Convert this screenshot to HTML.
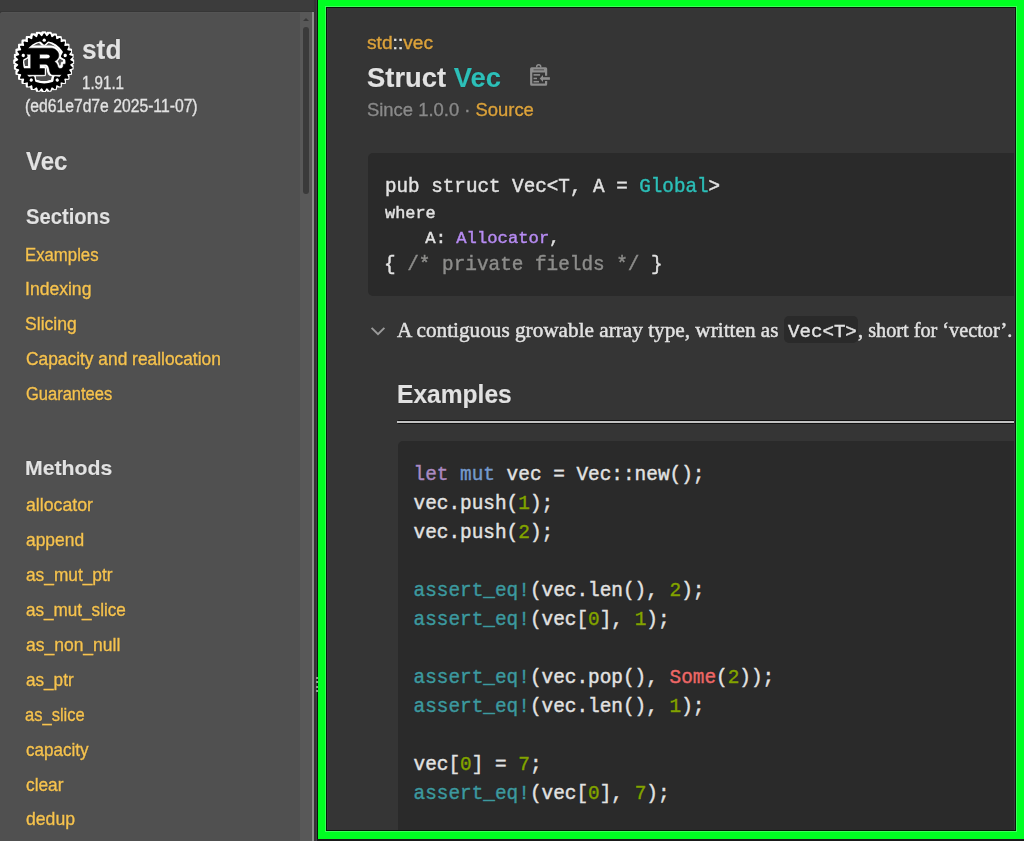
<!DOCTYPE html>
<html><head><meta charset="utf-8">
<style>
html,body{margin:0;padding:0}
body{width:1024px;height:841px;overflow:hidden;position:relative;background:#353535;font-family:"Liberation Sans",sans-serif}
.abs{position:absolute}
.t{position:absolute;white-space:pre;line-height:1;transform-origin:0 0;text-shadow:0 0 1px rgba(0,0,0,0.55)}
#topbar{left:0;top:0;width:316px;height:12px;background:#3c3c3c;box-shadow:inset 0 -1px 0 #363636}
#sidebar{left:0;top:12px;width:300px;height:829px;background:#505050;border-top-left-radius:3px;box-shadow:inset 0 1px 0 #545454}
#track{left:300px;top:12px;width:12px;height:829px;background:#585858}
#thumb{left:303px;top:27px;width:6.2px;height:166.5px;background:#3a3a3a;border-radius:3.1px}
#arrow{left:303.4px;top:18.2px;width:0;height:0;border-left:3px solid transparent;border-right:3px solid transparent;border-bottom:3.6px solid #383838}
#tline{left:312px;top:12px;width:2px;height:829px;background:#8c8c8c}
#dline{left:314px;top:0;width:2px;height:841px;background:#353535}
#pline{left:316px;top:0;width:1px;height:841px;background:#45384a}
#green{left:317px;top:0;width:707px;height:840px;background:#061806}
#main{left:326px;top:7px;width:690px;height:824px;overflow:hidden;background:#353535}
#gin{left:318px;top:0;width:706px;height:839px;box-sizing:border-box;border-left:8px solid #00ff22;border-top:7px solid #00ff22;border-right:8px solid #00ff22;border-bottom:8px solid #00ff22}
#gdark{left:326px;top:7px;width:690px;height:824px;box-sizing:border-box;border:1px solid #061806}
#bottomdark{left:317px;top:839px;width:707px;height:2px;background:#1a1a1a}
.cb{position:absolute;background:#2a2a2a;border-radius:5px}
</style></head><body>
<div id="topbar" class="abs"></div>
<div id="sidebar" class="abs"></div>
<div id="track" class="abs"></div>
<div id="arrow" class="abs"></div>
<div id="thumb" class="abs"></div>
<svg class="abs" id="logo" style="left:15.05px;top:32.9px;filter:drop-shadow(1.3px 0 0px #fff) drop-shadow(0 1.3px 0 #fff) drop-shadow(-1.3px 0 0 #fff) drop-shadow(0 -1.3px 0 #fff)" width="58.5" height="58.5" viewBox="0 0 106 106">
<defs><mask id="holes" maskUnits="userSpaceOnUse" x="-60" y="-60" width="120" height="120"><rect x="-60" y="-60" width="120" height="120" fill="white"/><circle transform="rotate(0)" cy="-40" r="3" fill="black"/><circle transform="rotate(72)" cy="-40" r="3" fill="black"/><circle transform="rotate(144)" cy="-40" r="3" fill="black"/><circle transform="rotate(216)" cy="-40" r="3" fill="black"/><circle transform="rotate(288)" cy="-40" r="3" fill="black"/></mask></defs>
<g transform="translate(53,53)">
<path transform="translate(0.5,0.5)" stroke="black" stroke-width="1" stroke-linejoin="round" d="M -9,-15 H 4 C 12,-15 12,-7 4,-7 H -9 Z M -40,22 H 0 V 11 H -9 V 3 H 1 C 12,3 6,22 15,22 H 40 V 3 H 34 V 5 C 34,13 25,12 24,7 C 23,2 19,-2 18,-2 C 33,-10 24,-26 12,-26 H -35 V -15 H -25 V 11 H -40 Z"/>
<g mask="url(#holes)"><circle r="43" fill="none" stroke="black" stroke-width="9"/><polygon transform="rotate(0.0000)" stroke="black" stroke-width="3" stroke-linejoin="round" points="46,3 51,0 46,-3"/><polygon transform="rotate(11.2500)" stroke="black" stroke-width="3" stroke-linejoin="round" points="46,3 51,0 46,-3"/><polygon transform="rotate(22.5000)" stroke="black" stroke-width="3" stroke-linejoin="round" points="46,3 51,0 46,-3"/><polygon transform="rotate(33.7500)" stroke="black" stroke-width="3" stroke-linejoin="round" points="46,3 51,0 46,-3"/><polygon transform="rotate(45.0000)" stroke="black" stroke-width="3" stroke-linejoin="round" points="46,3 51,0 46,-3"/><polygon transform="rotate(56.2500)" stroke="black" stroke-width="3" stroke-linejoin="round" points="46,3 51,0 46,-3"/><polygon transform="rotate(67.5000)" stroke="black" stroke-width="3" stroke-linejoin="round" points="46,3 51,0 46,-3"/><polygon transform="rotate(78.7500)" stroke="black" stroke-width="3" stroke-linejoin="round" points="46,3 51,0 46,-3"/><polygon transform="rotate(90.0000)" stroke="black" stroke-width="3" stroke-linejoin="round" points="46,3 51,0 46,-3"/><polygon transform="rotate(101.2500)" stroke="black" stroke-width="3" stroke-linejoin="round" points="46,3 51,0 46,-3"/><polygon transform="rotate(112.5000)" stroke="black" stroke-width="3" stroke-linejoin="round" points="46,3 51,0 46,-3"/><polygon transform="rotate(123.7500)" stroke="black" stroke-width="3" stroke-linejoin="round" points="46,3 51,0 46,-3"/><polygon transform="rotate(135.0000)" stroke="black" stroke-width="3" stroke-linejoin="round" points="46,3 51,0 46,-3"/><polygon transform="rotate(146.2500)" stroke="black" stroke-width="3" stroke-linejoin="round" points="46,3 51,0 46,-3"/><polygon transform="rotate(157.5000)" stroke="black" stroke-width="3" stroke-linejoin="round" points="46,3 51,0 46,-3"/><polygon transform="rotate(168.7500)" stroke="black" stroke-width="3" stroke-linejoin="round" points="46,3 51,0 46,-3"/><polygon transform="rotate(180.0000)" stroke="black" stroke-width="3" stroke-linejoin="round" points="46,3 51,0 46,-3"/><polygon transform="rotate(191.2500)" stroke="black" stroke-width="3" stroke-linejoin="round" points="46,3 51,0 46,-3"/><polygon transform="rotate(202.5000)" stroke="black" stroke-width="3" stroke-linejoin="round" points="46,3 51,0 46,-3"/><polygon transform="rotate(213.7500)" stroke="black" stroke-width="3" stroke-linejoin="round" points="46,3 51,0 46,-3"/><polygon transform="rotate(225.0000)" stroke="black" stroke-width="3" stroke-linejoin="round" points="46,3 51,0 46,-3"/><polygon transform="rotate(236.2500)" stroke="black" stroke-width="3" stroke-linejoin="round" points="46,3 51,0 46,-3"/><polygon transform="rotate(247.5000)" stroke="black" stroke-width="3" stroke-linejoin="round" points="46,3 51,0 46,-3"/><polygon transform="rotate(258.7500)" stroke="black" stroke-width="3" stroke-linejoin="round" points="46,3 51,0 46,-3"/><polygon transform="rotate(270.0000)" stroke="black" stroke-width="3" stroke-linejoin="round" points="46,3 51,0 46,-3"/><polygon transform="rotate(281.2500)" stroke="black" stroke-width="3" stroke-linejoin="round" points="46,3 51,0 46,-3"/><polygon transform="rotate(292.5000)" stroke="black" stroke-width="3" stroke-linejoin="round" points="46,3 51,0 46,-3"/><polygon transform="rotate(303.7500)" stroke="black" stroke-width="3" stroke-linejoin="round" points="46,3 51,0 46,-3"/><polygon transform="rotate(315.0000)" stroke="black" stroke-width="3" stroke-linejoin="round" points="46,3 51,0 46,-3"/><polygon transform="rotate(326.2500)" stroke="black" stroke-width="3" stroke-linejoin="round" points="46,3 51,0 46,-3"/><polygon transform="rotate(337.5000)" stroke="black" stroke-width="3" stroke-linejoin="round" points="46,3 51,0 46,-3"/><polygon transform="rotate(348.7500)" stroke="black" stroke-width="3" stroke-linejoin="round" points="46,3 51,0 46,-3"/><polygon transform="rotate(0)" stroke="black" stroke-width="6" stroke-linejoin="round" points="-7,-42 0,-35 7,-42"/><polygon transform="rotate(72)" stroke="black" stroke-width="6" stroke-linejoin="round" points="-7,-42 0,-35 7,-42"/><polygon transform="rotate(144)" stroke="black" stroke-width="6" stroke-linejoin="round" points="-7,-42 0,-35 7,-42"/><polygon transform="rotate(216)" stroke="black" stroke-width="6" stroke-linejoin="round" points="-7,-42 0,-35 7,-42"/><polygon transform="rotate(288)" stroke="black" stroke-width="6" stroke-linejoin="round" points="-7,-42 0,-35 7,-42"/></g>
</g></svg>
<div class="t" id="s_std" style="left:82.03px;top:36.60px;font-family:'Liberation Sans',sans-serif;font-size:27.00px;font-weight:bold;color:#e2e2e2;-webkit-text-stroke:0.15px;transform:scaleX(0.9737);">std</div>
<div class="t" id="s_ver" style="left:82.16px;top:73.51px;font-family:'Liberation Sans',sans-serif;font-size:18.50px;font-weight:normal;color:#e2e2e2;-webkit-text-stroke:0.40px;transform:scaleX(0.8164);">1.91.1</div>
<div class="t" id="s_hash" style="left:25.48px;top:97.51px;font-family:'Liberation Sans',sans-serif;font-size:17.50px;font-weight:normal;color:#e2e2e2;-webkit-text-stroke:0.40px;transform:scaleX(0.8974);">(ed61e7d7e 2025-11-07)</div>
<div class="t" id="s_vec" style="left:25.92px;top:148.01px;font-family:'Liberation Sans',sans-serif;font-size:26.00px;font-weight:bold;color:#e2e2e2;-webkit-text-stroke:0.15px;transform:scaleX(0.9230);">Vec</div>
<div class="t" id="s_sections" style="left:25.92px;top:206.81px;font-family:'Liberation Sans',sans-serif;font-size:21.50px;font-weight:bold;color:#e2e2e2;-webkit-text-stroke:0.15px;transform:scaleX(0.9394);">Sections</div>
<div class="t" id="s_sec0" style="left:25.38px;top:245.51px;font-family:'Liberation Sans',sans-serif;font-size:18.00px;font-weight:normal;color:#f6c350;-webkit-text-stroke:0.40px;transform:scaleX(0.9308);">Examples</div>
<div class="t" id="s_sec1" style="left:25.32px;top:280.36px;font-family:'Liberation Sans',sans-serif;font-size:18.00px;font-weight:normal;color:#f6c350;-webkit-text-stroke:0.40px;transform:scaleX(0.9758);">Indexing</div>
<div class="t" id="s_sec2" style="left:25.32px;top:315.21px;font-family:'Liberation Sans',sans-serif;font-size:18.00px;font-weight:normal;color:#f6c350;-webkit-text-stroke:0.40px;transform:scaleX(0.9768);">Slicing</div>
<div class="t" id="s_sec3" style="left:26.33px;top:350.05px;font-family:'Liberation Sans',sans-serif;font-size:18.00px;font-weight:normal;color:#f6c350;-webkit-text-stroke:0.40px;transform:scaleX(0.9640);">Capacity and reallocation</div>
<div class="t" id="s_sec4" style="left:26.38px;top:384.90px;font-family:'Liberation Sans',sans-serif;font-size:18.00px;font-weight:normal;color:#f6c350;-webkit-text-stroke:0.40px;transform:scaleX(0.9163);">Guarantees</div>
<div class="t" id="s_methods" style="left:24.88px;top:456.61px;font-family:'Liberation Sans',sans-serif;font-size:21.00px;font-weight:bold;color:#e2e2e2;-webkit-text-stroke:0.15px;transform:scaleX(1.0120);">Methods</div>
<div class="t" id="s_m0" style="left:26.33px;top:496.10px;font-family:'Liberation Sans',sans-serif;font-size:18.50px;font-weight:normal;color:#f6c350;-webkit-text-stroke:0.40px;transform:scaleX(0.9569);">allocator</div>
<div class="t" id="s_m1" style="left:26.35px;top:531.04px;font-family:'Liberation Sans',sans-serif;font-size:18.50px;font-weight:normal;color:#f6c350;-webkit-text-stroke:0.40px;transform:scaleX(0.9406);">append</div>
<div class="t" id="s_m2" style="left:26.36px;top:565.96px;font-family:'Liberation Sans',sans-serif;font-size:18.50px;font-weight:normal;color:#f6c350;-webkit-text-stroke:0.40px;transform:scaleX(0.9350);">as_mut_ptr</div>
<div class="t" id="s_m3" style="left:26.38px;top:600.90px;font-family:'Liberation Sans',sans-serif;font-size:18.50px;font-weight:normal;color:#f6c350;-webkit-text-stroke:0.40px;transform:scaleX(0.9246);">as_mut_slice</div>
<div class="t" id="s_m4" style="left:26.35px;top:635.82px;font-family:'Liberation Sans',sans-serif;font-size:18.50px;font-weight:normal;color:#f6c350;-webkit-text-stroke:0.40px;transform:scaleX(0.9450);">as_non_null</div>
<div class="t" id="s_m5" style="left:26.35px;top:670.75px;font-family:'Liberation Sans',sans-serif;font-size:18.50px;font-weight:normal;color:#f6c350;-webkit-text-stroke:0.40px;transform:scaleX(0.9261);">as_ptr</div>
<div class="t" id="s_m6" style="left:25.40px;top:705.68px;font-family:'Liberation Sans',sans-serif;font-size:18.50px;font-weight:normal;color:#f6c350;-webkit-text-stroke:0.40px;transform:scaleX(0.8928);">as_slice</div>
<div class="t" id="s_m7" style="left:26.37px;top:740.62px;font-family:'Liberation Sans',sans-serif;font-size:18.50px;font-weight:normal;color:#f6c350;-webkit-text-stroke:0.40px;transform:scaleX(0.9228);">capacity</div>
<div class="t" id="s_m8" style="left:26.39px;top:775.54px;font-family:'Liberation Sans',sans-serif;font-size:18.50px;font-weight:normal;color:#f6c350;-webkit-text-stroke:0.40px;transform:scaleX(0.9341);">clear</div>
<div class="t" id="s_m9" style="left:26.34px;top:810.47px;font-family:'Liberation Sans',sans-serif;font-size:18.50px;font-weight:normal;color:#f6c350;-webkit-text-stroke:0.40px;transform:scaleX(0.9522);">dedup</div>
<div id="tline" class="abs"></div>
<div id="dline" class="abs"></div>
<div id="pline" class="abs"></div>
<div id="green" class="abs"></div>
<div class="abs" style="left:316.3px;top:677.0px;width:1.7px;height:2px;background:#959595"></div><div class="abs" style="left:316.3px;top:681.3px;width:1.7px;height:2px;background:#959595"></div><div class="abs" style="left:316.3px;top:685.6px;width:1.7px;height:2px;background:#959595"></div><div class="abs" style="left:316.3px;top:689.9px;width:1.7px;height:2px;background:#959595"></div>
<div id="main" class="abs"></div>
<div class="cb" style="left:368.1px;top:153.2px;width:700px;height:142.6px"></div>
<div class="cb" style="left:784.4px;top:315.7px;width:73.6px;height:27.3px"></div>
<svg class="abs" style="left:368px;top:324px" width="20" height="14" viewBox="0 0 20 14"><polyline points="3.6,3.9 10,10.2 16.4,3.9" fill="none" stroke="#9a9a9a" stroke-width="2"/></svg>
<div class="abs" style="left:397px;top:420px;width:630px;height:4px;background:#121212;border-radius:2px"></div><div class="abs" style="left:397px;top:421px;width:630px;height:2px;background:#c2c2c2"></div>
<div class="cb" style="left:397.8px;top:441.3px;width:700px;height:500px"></div>
<svg class="abs" style="left:528px;top:62px" width="24" height="26" viewBox="0 0 24 26"><g fill="#8e8e8e"><path d="M3.6 5.3H17.7A1.5 1.5 0 0 1 19.2 6.8V13.7H17V10.5H4.3V21.5H17V19H19.2V22.2A1.5 1.5 0 0 1 17.7 23.7H3.6A1.5 1.5 0 0 1 2.1 22.2V6.8A1.5 1.5 0 0 1 3.6 5.3Z"/><rect x="5.5" y="12.1" width="6.6" height="1.6"/><rect x="5.5" y="15.7" width="3.5" height="1.5"/><rect x="5.5" y="18.9" width="5.5" height="1.6"/><rect x="14.8" y="15.2" width="7.1" height="2.6"/><path d="M11.7 16.5L15 13V20Z"/></g><rect x="5.5" y="7.4" width="10.5" height="0.9" fill="#4a4a4a"/><path d="M8.7 5.6V4.8A2 2 0 0 1 12.7 4.8V5.6" fill="none" stroke="#8e8e8e" stroke-width="1.5"/></svg>

<div class="t" id="m_path" style="left:367.47px;top:35.21px;font-family:'Liberation Sans',sans-serif;font-size:17.50px;font-weight:normal;color:#e2e2e2;-webkit-text-stroke:0.40px;transform:scaleX(1.0952);"><span style="color:#dba23c">std</span><span style="color:#e2e2e2">::</span><span style="color:#dba23c">vec</span></div>
<div class="t" id="m_title" style="left:366.98px;top:64.71px;font-family:'Liberation Sans',sans-serif;font-size:27.00px;font-weight:bold;color:#e2e2e2;-webkit-text-stroke:0.15px;transform:scaleX(1.0139);"><span style="color:#e2e2e2">Struct </span><span style="color:#2dbfb8">Vec</span></div>
<div class="t" id="m_since" style="left:367.00px;top:100.61px;font-family:'Liberation Sans',sans-serif;font-size:18.50px;font-weight:normal;color:#e2e2e2;-webkit-text-stroke:0.40px;transform:scaleX(0.9952);"><span style="color:#8a8a8a">Since 1.0.0 · </span><span style="color:#dba23c">Source</span></div>
<div class="t" id="d1" style="left:384.50px;top:178.01px;font-family:'Liberation Mono',monospace;font-size:19.30px;font-weight:normal;color:#e2e2e2;-webkit-text-stroke:0.45px;transform:scaleX(0.9988);"><span style="color:#e2e2e2">pub struct Vec&lt;T, A = </span><span style="color:#2dbfb8">Global</span><span style="color:#e2e2e2">&gt;</span></div>
<div class="t" id="d2" style="left:384.50px;top:206.00px;font-family:'Liberation Mono',monospace;font-size:16.90px;font-weight:normal;color:#e2e2e2;-webkit-text-stroke:0.45px;transform:scaleX(1.0003);">where</div>
<div class="t" id="d3" style="left:383.75px;top:231.40px;font-family:'Liberation Mono',monospace;font-size:16.90px;font-weight:normal;color:#e2e2e2;-webkit-text-stroke:0.45px;transform:scaleX(1.0189);"><span style="color:#e2e2e2">    A: </span><span style="color:#b78cf2">Allocator</span><span style="color:#e2e2e2">,</span></div>
<div class="t" id="d4" style="left:383.99px;top:256.01px;font-family:'Liberation Mono',monospace;font-size:19.30px;font-weight:normal;color:#e2e2e2;-webkit-text-stroke:0.45px;transform:scaleX(1.0036);"><span style="color:#e2e2e2">{ </span><span style="color:#8d8d8b">/* private fields */</span><span style="color:#e2e2e2"> }</span></div>
<div class="t" id="p1" style="left:397.00px;top:320.01px;font-family:'Liberation Serif',serif;font-size:21.00px;font-weight:normal;color:#e2e2e2;-webkit-text-stroke:0.50px;transform:scaleX(1.0111);">A contiguous growable array type, written as</div>
<div class="t" id="c1" style="left:787.81px;top:323.81px;font-family:'Liberation Mono',monospace;font-size:18.50px;font-weight:normal;color:#e2e2e2;-webkit-text-stroke:0.45px;transform:scaleX(1.0332);">Vec&lt;T&gt;</div>
<div class="t" id="p2" style="left:858.22px;top:319.71px;font-family:'Liberation Serif',serif;font-size:21.00px;font-weight:normal;color:#e2e2e2;-webkit-text-stroke:0.50px;transform:scaleX(0.9644);">, short for ‘vector’.</div>
<div class="t" id="h_ex" style="left:397.11px;top:381.80px;font-family:'Liberation Sans',sans-serif;font-size:25.00px;font-weight:bold;color:#e2e2e2;-webkit-text-stroke:0.15px;transform:scaleX(0.9828);">Examples</div>
<div class="t" id="e0" style="left:413.50px;top:465.51px;font-family:'Liberation Mono',monospace;font-size:19.40px;font-weight:normal;color:#e2e2e2;-webkit-text-stroke:0.45px;"><span style="color:#ab8ac1">let</span> <span style="color:#769acb">mut</span><span style="color:#e2e2e2"> vec = Vec::new();</span></div>
<div class="t" id="e1" style="left:413.50px;top:494.51px;font-family:'Liberation Mono',monospace;font-size:19.40px;font-weight:normal;color:#e2e2e2;-webkit-text-stroke:0.45px;"><span style="color:#e2e2e2">vec.push(</span><span style="color:#83a300">1</span><span style="color:#e2e2e2">);</span></div>
<div class="t" id="e2" style="left:413.50px;top:523.51px;font-family:'Liberation Mono',monospace;font-size:19.40px;font-weight:normal;color:#e2e2e2;-webkit-text-stroke:0.45px;"><span style="color:#e2e2e2">vec.push(</span><span style="color:#83a300">2</span><span style="color:#e2e2e2">);</span></div>
<div class="t" id="e4" style="left:413.50px;top:581.51px;font-family:'Liberation Mono',monospace;font-size:19.40px;font-weight:normal;color:#e2e2e2;-webkit-text-stroke:0.45px;"><span style="color:#3e999f">assert_eq!</span><span style="color:#e2e2e2">(vec.len(), </span><span style="color:#83a300">2</span><span style="color:#e2e2e2">);</span></div>
<div class="t" id="e5" style="left:413.50px;top:610.51px;font-family:'Liberation Mono',monospace;font-size:19.40px;font-weight:normal;color:#e2e2e2;-webkit-text-stroke:0.45px;"><span style="color:#3e999f">assert_eq!</span><span style="color:#e2e2e2">(vec[</span><span style="color:#83a300">0</span><span style="color:#e2e2e2">], </span><span style="color:#83a300">1</span><span style="color:#e2e2e2">);</span></div>
<div class="t" id="e7" style="left:413.50px;top:668.51px;font-family:'Liberation Mono',monospace;font-size:19.40px;font-weight:normal;color:#e2e2e2;-webkit-text-stroke:0.45px;"><span style="color:#3e999f">assert_eq!</span><span style="color:#e2e2e2">(vec.pop(), </span><span style="color:#ee6868">Some</span><span style="color:#e2e2e2">(</span><span style="color:#83a300">2</span><span style="color:#e2e2e2">));</span></div>
<div class="t" id="e8" style="left:413.50px;top:697.51px;font-family:'Liberation Mono',monospace;font-size:19.40px;font-weight:normal;color:#e2e2e2;-webkit-text-stroke:0.45px;"><span style="color:#3e999f">assert_eq!</span><span style="color:#e2e2e2">(vec.len(), </span><span style="color:#83a300">1</span><span style="color:#e2e2e2">);</span></div>
<div class="t" id="e10" style="left:413.50px;top:755.51px;font-family:'Liberation Mono',monospace;font-size:19.40px;font-weight:normal;color:#e2e2e2;-webkit-text-stroke:0.45px;"><span style="color:#e2e2e2">vec[</span><span style="color:#83a300">0</span><span style="color:#e2e2e2">] = </span><span style="color:#83a300">7</span><span style="color:#e2e2e2">;</span></div>
<div class="t" id="e11" style="left:413.50px;top:784.51px;font-family:'Liberation Mono',monospace;font-size:19.40px;font-weight:normal;color:#e2e2e2;-webkit-text-stroke:0.45px;"><span style="color:#3e999f">assert_eq!</span><span style="color:#e2e2e2">(vec[</span><span style="color:#83a300">0</span><span style="color:#e2e2e2">], </span><span style="color:#83a300">7</span><span style="color:#e2e2e2">);</span></div>
<div id="gdark" class="abs"></div>
<div id="gin" class="abs"></div>
<div class="abs" style="left:327px;top:8px;width:1px;height:822px;background:#3f3842"></div>
<div class="abs" style="left:1014px;top:8px;width:1px;height:822px;background:#3f3842"></div>
<div class="abs" style="left:325px;top:6px;width:692px;height:1px;background:#3cff5a"></div>
<div class="abs" style="left:325px;top:6px;width:1px;height:826px;background:#3cff5a"></div>
<div class="abs" style="left:1016px;top:6px;width:1px;height:826px;background:#3cff5a"></div>
<div class="abs" style="left:325px;top:831px;width:692px;height:1px;background:#3cff5a"></div>

<div id="bottomdark" class="abs"></div>
</body></html>
